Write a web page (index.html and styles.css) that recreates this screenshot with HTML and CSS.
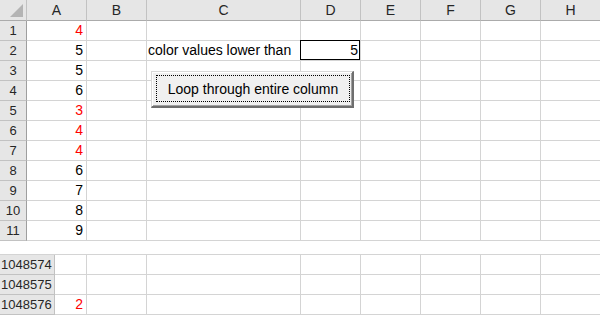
FILE: index.html
```html
<!DOCTYPE html>
<html lang="en">
<head>
    <meta charset="UTF-8">
    <title>Loop through entire column</title>
    <link rel="stylesheet" href="styles.css">
</head>
<body>

<div class="sheet">
    <div class="grid top">
        <div class="head corner"></div>
        <div class="head col">A</div>
        <div class="head col">B</div>
        <div class="head col">C</div>
        <div class="head col">D</div>
        <div class="head col">E</div>
        <div class="head col">F</div>
        <div class="head col">G</div>
        <div class="head col">H</div>
    </div>
    <div class="grid top" id="rows"></div>

    <div class="grid bottom" id="last-rows"></div>

    <button class="macro-btn"><span>Loop through entire column</span></button>
</div>

<script>
    const valores = [4, 5, 5, 6, 3, 4, 4, 6, 7, 8, 9];
    const limite = 5;

    function celda(texto, clase) {
        let c = document.createElement("div");
        c.className = clase;
        c.textContent = texto;
        return c;
    }

    function fila(contenedor, numero, valor, extra) {
        contenedor.appendChild(celda(numero, "head row"));
        let a = celda(valor === undefined ? "" : valor, "cell num");
        if (valor !== undefined && valor < limite) a.classList.add("low");
        contenedor.appendChild(a);
        contenedor.appendChild(celda("", "cell"));
        contenedor.appendChild(extra ? celda(extra[0], "cell label") : celda("", "cell"));
        contenedor.appendChild(extra ? celda(extra[1], "cell num boxed") : celda("", "cell"));
        for (let i = 0; i < 4; i++) contenedor.appendChild(celda("", "cell"));
    }

    const filas = document.getElementById("rows");
    valores.forEach(function (v, i) {
        fila(filas, i + 1, v, i === 1 ? ["color values lower than", limite] : null);
    });

    const ultimas = document.getElementById("last-rows");
    fila(ultimas, 1048574);
    fila(ultimas, 1048575);
    fila(ultimas, 1048576, 2);
</script>

</body>
</html>
```

FILE: styles.css
```css
/* Hoja de cálculo */
body {
    margin: 0;
    background-color: #fff;
    font-family: "Liberation Sans", Arial, sans-serif;
    color: #000;
}
.sheet {
    position: relative;
    width: 600px;
    height: 315px;
    overflow: hidden;
}
.grid {
    display: grid;
    width: 601px;
}
.grid.top {
    grid-template-columns: 27px 60px 60px 154px 60px 60px 60px 60px 60px;
    grid-auto-rows: 20px;
}
.grid.top:first-child {
    grid-auto-rows: 21px;
}
.grid.bottom {
    grid-template-columns: 55px 32px 60px 154px 60px 60px 60px 60px 60px;
    grid-auto-rows: 20px;
    margin-top: 13px;
    border-top: 1px solid #d4d4d4;
}
.cell, .head {
    box-sizing: border-box;
    border-right: 1px solid #d4d4d4;
    border-bottom: 1px solid #d4d4d4;
    font-size: 14px;
    line-height: 19px;
    white-space: nowrap;
}
.head {
    background-color: #e6e6e6;
    color: #262626;
}
.head.col {
    border-right-color: #c2c2c2;
    border-bottom-color: #ababab;
    text-align: center;
    line-height: 21px;
}
.head.corner {
    position: relative;
    border-right-color: #c2c2c2;
    border-bottom-color: #ababab;
}
.head.corner::after {
    content: "";
    position: absolute;
    right: 3px;
    bottom: 3px;
    border-left: 13px solid transparent;
    border-bottom: 13px solid #b4b4b4;
}
.head.row {
    border-right-color: #9e9e9e;
    border-bottom-color: #c2c2c2;
    text-align: center;
    font-size: 13px;
}
.grid.bottom .head.row {
    text-align: left;
    padding-left: 1px;
    border-right-color: #c2c2c2;
}
.cell.num {
    text-align: right;
    padding-right: 3px;
}
.cell.low {
    color: #ff0000;
}
.cell.label {
    padding-left: 1px;
}
.cell.boxed {
    position: relative;
    padding-right: 2px;
}
.cell.boxed::after {
    content: "";
    position: absolute;
    top: -1px;
    left: -1px;
    right: 0;
    bottom: 0;
    border: 1px solid #000;
}
.macro-btn {
    position: absolute;
    left: 151px;
    top: 71px;
    width: 203px;
    height: 37px;
    padding: 0;
    box-sizing: border-box;
    background-color: #f0f0f0;
    border-style: solid;
    border-width: 1px 2px 2px 1px;
    border-color: #d8d8d8 #6e6e6e #6e6e6e #d8d8d8;
    box-shadow: inset 1px 1px #fff, inset -1px -1px #a0a0a0;
    font-family: "Liberation Sans", Arial, sans-serif;
    font-size: 14px;
    color: #000;
}
.macro-btn span {
    position: absolute;
    left: 4px;
    top: 3px;
    right: 2px;
    bottom: 4px;
    border: 1px dotted #000;
    display: flex;
    align-items: center;
    justify-content: center;
}
```
